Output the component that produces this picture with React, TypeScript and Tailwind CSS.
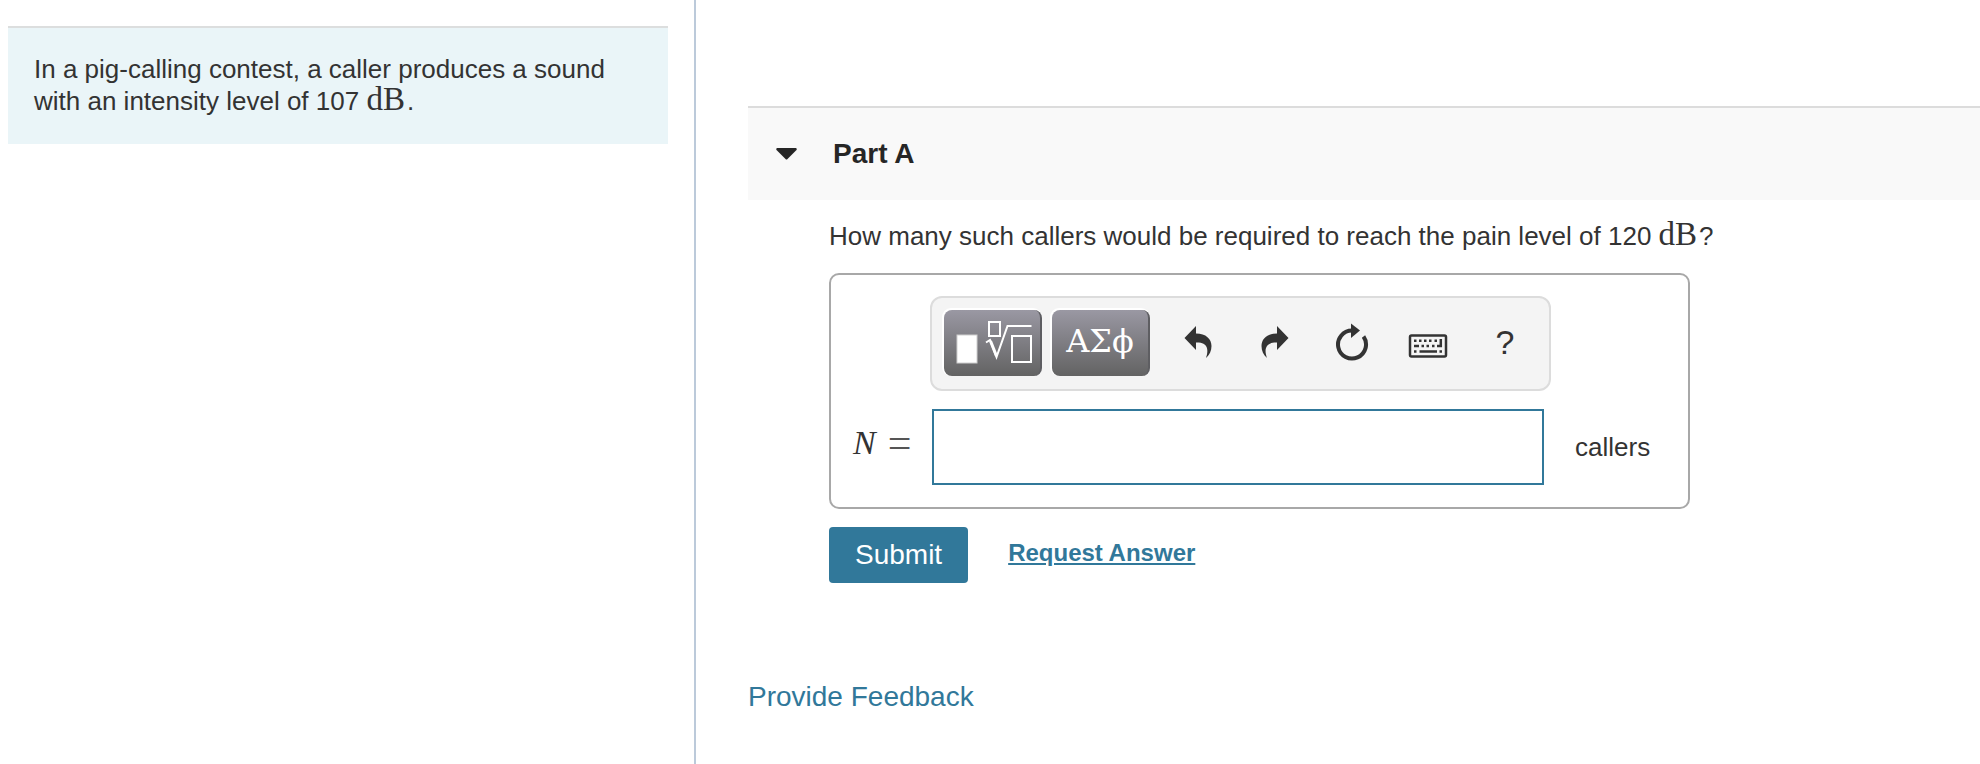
import type { ReactNode } from 'react';

const Unit = ({ children }: { children: ReactNode }) => (
  <span className="mr-0.5 font-['Liberation_Serif',serif] text-[33px] leading-6">{children}</span>
);

function ToolButton({ label, children }: { label: string; children: ReactNode }) {
  return (
    <button type="button" aria-label={label} className="flex h-10 w-10 items-center justify-center text-[#333]">
      {children}
    </button>
  );
}

const darkButton =
  "flex h-[66px] w-[98px] items-center justify-center rounded-lg border-r-2 border-[#5e5e62] bg-linear-to-b from-[#9a98a3] to-[#636363] text-white shadow-[-1px_-1px_0_1px_#fff]";

function TemplatesIcon() {
  return (
    <svg width="76" height="44" viewBox="0 0 76 44" fill="none" stroke="#fff" strokeWidth="2">
      <rect x="1" y="15" width="20" height="28" fill="#fff" stroke="#cfcfcf" strokeWidth="1" />
      <rect x="33" y="2" width="11" height="14" />
      <path d="M30 22.500l4-2.500 6.500 17L51.500 6h24" />
      <path d="M34.500 21l6 15" strokeWidth="3" />
      <rect x="56" y="16" width="19" height="26" />
    </svg>
  );
}

function BendArrow({ flipped = false }: { flipped?: boolean }) {
  return (
    <svg width="28" height="32" viewBox="0 0 28 32" fill="currentColor" className={flipped ? '-scale-x-100' : ''}>
      <path d="M0.500 12L12 0V7.500C22 7.500 27.500 13 27.500 20C27.500 25 25.500 29 22 32C25 24 24 16 12 16.500V24Z" />
    </svg>
  );
}

function ResetIcon() {
  return (
    <svg width="34" height="38" viewBox="0 0 34 38" fill="none">
      <path d="M17 7.500A14 14 0 1 0 28.500 13.500" stroke="currentColor" strokeWidth="4" />
      <path d="M16 0.500L25 7.500L16 15Z" fill="currentColor" />
    </svg>
  );
}

function KeyboardIcon() {
  return (
    <svg width="40" height="24" viewBox="0 0 40 24" fill="none" stroke="currentColor" strokeWidth="2.500">
      <rect x="2" y="1.500" width="36" height="21" rx="1.500" />
      <path d="M6 6.700h2.500M11 6.700h2.500M16 6.700h2.500M21 6.700h2.500M26.500 6.700h2.500" />
      <path d="M6 12h5M13.500 12h2.500M18.500 12h2.500M24 12h2.500M29 12h5M32.800 5v8" />
      <path d="M6 17.500h2.500M11.500 17.500h17.500M31.500 17.500h2.500" />
    </svg>
  );
}

export default function App() {
  return (
    <div className="flex min-h-screen bg-white font-['Liberation_Sans',Arial,sans-serif] text-[26px] leading-8 text-[#333]">
      <aside className="w-[696px] shrink-0 border-r-2 border-[#bccada] pt-[26px] pr-[26px] pl-2">
        <div className="border-t-2 border-[#dcdede] bg-[#eaf5f8] px-[26px] pt-[25px] pb-[27px]">
          <p>
            In a pig-calling contest, a caller produces a sound with an intensity level of 107 <Unit>dB</Unit>.
          </p>
        </div>
      </aside>

      <main className="min-w-0 flex-1 pt-[106px] pl-[52px]">
        <section>
          <h2 className="border-t-2 border-[#dcdcdc] bg-[#f9f9f9]">
            <button type="button" aria-expanded="true" className="flex h-[92px] w-full items-center gap-9 pl-7 text-[28px] font-bold text-[#262626]">
              <svg width="21" height="12" viewBox="0 0 21 12" fill="currentColor">
                <path d="M1 0H20Q21.500 1 20 2.500L11.500 11Q10.500 12 9.500 11L1 2.500Q-0.500 1 1 0Z" />
              </svg>
              Part A
            </button>
          </h2>

          <div className="pt-5 pl-[81px]">
            <p>
              How many such callers would be required to reach the pain level of 120 <Unit>dB</Unit>?
            </p>

            <div className="mt-[21px] w-fit rounded-[10px] border-2 border-[#a8a8a8] pt-[21px] pr-[38px] pb-[22px] pl-[22px]">
              <div className="grid grid-cols-[77px_auto_auto] items-center gap-y-[18px]">
                <div className="col-start-2 flex h-[95px] w-[621px] items-center rounded-xl border-2 border-[#dcdcdc] bg-[#f4f4f4] px-3 pb-0.5">
                  <div className="flex gap-2.5">
                    <button type="button" aria-label="Templates" className={`${darkButton} pb-0.5 pl-1`}>
                      <TemplatesIcon />
                    </button>
                    <button type="button" className={`${darkButton} pb-1 font-['DejaVu_Serif',serif] text-[32px]`}>
                      ΑΣϕ
                    </button>
                  </div>
                  <div className="flex flex-1 justify-between pr-3 pb-0.5 pl-7">
                    <ToolButton label="Undo"><BendArrow /></ToolButton>
                    <ToolButton label="Redo"><BendArrow flipped /></ToolButton>
                    <ToolButton label="Reset"><ResetIcon /></ToolButton>
                    <ToolButton label="Keyboard shortcuts"><span className="pt-2"><KeyboardIcon /></span></ToolButton>
                    <ToolButton label="Help"><span className="text-[34px]">?</span></ToolButton>
                  </div>
                </div>
                <label htmlFor="answer" className="col-start-1 flex items-center gap-3 pb-2 font-['Liberation_Serif',serif] text-[34px]">
                  <i>N</i>
                  <span className="text-[42px] text-[#555]">=</span>
                </label>
                <input id="answer" type="text" className="ml-0.5 h-[76px] w-[612px] border-2 border-[#31789a] px-3 outline-none" />
                <span className="pl-6">callers</span>
              </div>
            </div>

            <div className="mt-[18px] flex items-center gap-10">
              <button type="button" className="h-14 rounded bg-[#31789a] px-[26px] text-[28px] text-white">Submit</button>
              <a href="#answer" className="pb-1 text-2xl font-bold text-[#31789a] underline">Request Answer</a>
            </div>
          </div>
        </section>

        <a href="#feedback" className="mt-[98px] inline-block text-[28px] text-[#31789a]">Provide Feedback</a>
      </main>
    </div>
  );
}
